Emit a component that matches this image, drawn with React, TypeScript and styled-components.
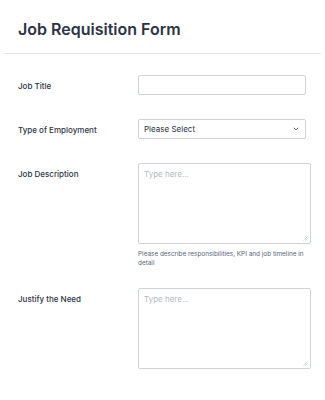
import React from "react";
import styled, { createGlobalStyle } from "styled-components";

const GlobalStyle = createGlobalStyle`
  html, body {
    margin: 0;
    padding: 0;
    background: #fff;
  }
  body {
    font-family: Inter, "Noto Sans", sans-serif;
    color: #2c3345;
  }
`;

const Grip = () => (
  <GripIcon width="5" height="5" viewBox="0 0 5 5">
    <path d="M4.5 0.5 L0.5 4.5 M4.5 2.5 L2.5 4.5" stroke="#b9bfcb" strokeWidth="0.7" />
  </GripIcon>
);

const App = () => {
  return (
    <>
      <GlobalStyle />
      <Page>
        <Header>
          <Title>Job Requisition Form</Title>
        </Header>
        <Form>
          <Row>
            <Label>Job Title</Label>
            <Field>
              <TextInput type="text" />
            </Field>
          </Row>
          <Row>
            <Label>Type of Employment</Label>
            <Field>
              <SelectBox>
                <span>Please Select</span>
                <svg width="6" height="4" viewBox="0 0 6 4">
                  <path d="M0.8 0.8 L3 3 L5.2 0.8" fill="none" stroke="#57647e" strokeWidth="1" />
                </svg>
              </SelectBox>
            </Field>
          </Row>
          <Row $tight>
            <Label>Job Description</Label>
            <Field>
              <AreaWrap>
                <TextArea placeholder="Type here..." />
                <Grip />
              </AreaWrap>
              <Helper>Please describe responsibilities, KPI and job timeline in detail</Helper>
            </Field>
          </Row>
          <Row>
            <Label>Justify the Need</Label>
            <Field>
              <AreaWrap>
                <TextArea placeholder="Type here..." />
                <Grip />
              </AreaWrap>
            </Field>
          </Row>
        </Form>
      </Page>
    </>
  );
};

export default App;

const Page = styled.div`
  width: 325px;
  height: 400px;
  overflow: hidden;
  background: #fff;
`;

const Header = styled.div`
  margin: 0 4px;
  height: 54px;
  box-sizing: border-box;
  padding: 19px 0 0 14px;
  border-bottom: 1px solid #e3e5ea;
`;

const Title = styled.h1`
  margin: 0;
  font-size: 16px;
  line-height: 20px;
  font-weight: 600;
  color: #2c3345;
`;

const Form = styled.div`
  padding-top: 9px;
  display: flex;
  flex-direction: column;
`;

const Row = styled.div<{ $tight?: boolean }>`
  display: flex;
  align-items: flex-start;
  padding: ${(p) => (p.$tight ? "12px 0 8px" : "12px 0")};
`;

const Label = styled.div`
  width: 138px;
  height: 20px;
  flex-shrink: 0;
  padding: 1px 0 0 18px;
  box-sizing: border-box;
  font-size: 8px;
  line-height: 20px;
  font-weight: 500;
  color: #2c3345;
  white-space: nowrap;
`;

const Field = styled.div`
  display: flex;
  flex-direction: column;
`;

const TextInput = styled.input`
  width: 168px;
  height: 20px;
  box-sizing: border-box;
  border: 1px solid #cdd2dd;
  border-radius: 2px;
  margin: 0;
  padding: 0 5px;
  font-family: inherit;
  font-size: 8px;
`;

const SelectBox = styled.div`
  width: 168px;
  height: 20px;
  box-sizing: border-box;
  border: 1px solid #cdd2dd;
  border-radius: 2px;
  padding: 0 6px 0 5px;
  display: flex;
  align-items: center;
  justify-content: space-between;
  font-size: 8px;
  color: #2c3345;
`;

const AreaWrap = styled.div`
  position: relative;
  width: 173px;
  height: 81px;
`;

const TextArea = styled.textarea`
  width: 173px;
  height: 81px;
  box-sizing: border-box;
  border: 1px solid #cdd2dd;
  border-radius: 2px;
  margin: 0;
  padding: 5px 5px;
  font-family: inherit;
  font-size: 8px;
  line-height: 10px;
  display: block;
  resize: none;
  &::placeholder {
    color: #b4b9c6;
  }
`;

const GripIcon = styled.svg`
  position: absolute;
  right: 3px;
  bottom: 3px;
  pointer-events: none;
`;

const Helper = styled.div`
  width: 172px;
  margin-top: 6px;
  font-size: 6.4px;
  line-height: 9px;
  color: #57647e;
`;
